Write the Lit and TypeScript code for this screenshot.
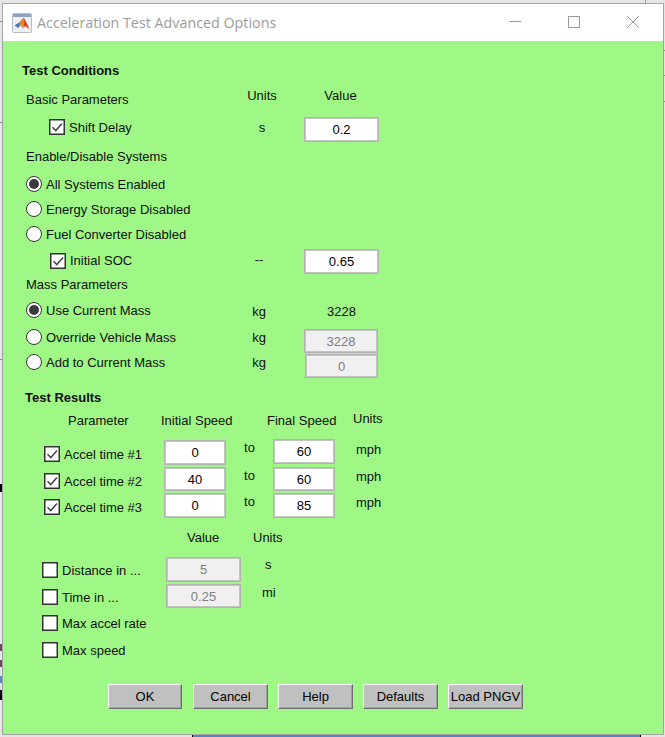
import { LitElement, html, css, svg } from "lit";
import { customElement } from "lit/decorators.js";

const checkMark = svg`<path d="M3.5 8.2 L6.8 11.6 L13 4.6" fill="none" stroke="#444" stroke-width="1.5"/>`;

@customElement("app-root")
export class AppRoot extends LitElement {
  static styles = css`
    :host {
      display: block;
      position: relative;
      width: 665px;
      height: 737px;
      overflow: hidden;
      background: #e6e6e6;
      font-family: "Liberation Sans", Arial, sans-serif;
      font-size: 13px;
      color: #101010;
    }
    .behind { position: absolute; }
    .line-l { left: 0; width: 2px; height: 1px; background: #8c8c8c; }
    .line-r { left: 664px; width: 1px; height: 1px; background: #8c8c8c; }
    .blk { left: 0; width: 2px; background: #000; }
    .speck { left: 0; width: 2px; height: 7px; background: #6a4a5c; }
    .speck.blue { background: #5a88b8; }
    .strip-blue { left: 193px; top: 735px; width: 447px; height: 2px; background: #4f86c6; }
    .strip-blk1 { left: 192px; top: 735px; width: 1px; height: 2px; background: #000; }
    .strip-blk2 { left: 640px; top: 735px; width: 1px; height: 2px; background: #000; }
    .top-blk { left: 645px; top: 0; width: 1px; height: 3px; background: #9a9a9a; }

    .window {
      position: relative;
      box-sizing: border-box;
      width: 662px;
      height: 732px;
      margin: 3px 0 0 2px;
      border: 1px solid #a3a3a3;
      display: flex;
      flex-direction: column;
    }
    .titlebar {
      height: 37px;
      flex: none;
      background: #fff;
      display: flex;
      align-items: center;
      padding-left: 9px;
    }
    .logo { width: 20px; height: 20px; margin-right: 5px; flex: none; }
    .title {
      font-family: "Open Sans", "Noto Sans", sans-serif;
      font-size: 14.3px;
      color: #9b9b9b;
      white-space: nowrap;
    }
    .controls { margin-left: auto; display: flex; padding-right: 1px; }
    .ctl {
      width: 59px;
      height: 37px;
      display: flex;
      align-items: center;
      justify-content: center;
    }
    .ctl svg { width: 14px; height: 14px; margin-bottom: 2px; }

    .panel {
      flex: 1;
      background: #9ff786;
      padding: 19px 0 0 23px;
      display: flex;
      flex-direction: column;
    }
    .row { display: grid; align-items: center; white-space: nowrap; }
    .h20 { height: 20px; }
    .h23 { height: 23px; }
    .h24 { height: 24px; }
    .h25 { height: 25px; }
    .mt2 { margin-top: 2px; }
    .mt3 { margin-top: 3px; }
    .mt4 { margin-top: 4px; }
    .mt5 { margin-top: 5px; }
    .mt6 { margin-top: 6px; }
    .mt7 { margin-top: 7px; }
    .mt8 { margin-top: 8px; }
    .mt9 { margin-top: 9px; }
    .mt10 { margin-top: 10px; }
    .mt12 { margin-top: 12px; }
    .mt24 { margin-top: 24px; }

    .cond { grid-template-columns: 214px 44px 95px; }
    .speed { grid-template-columns: 138px 62px 47px 62px auto; }
    .extra { grid-template-columns: 140px 75px auto; }

    .center { text-align: center; }
    .right-col { justify-self: end; width: 75px; text-align: center; box-sizing: border-box; }
    .shift-l1 { padding-right: 2px; }
    .shift-l3 { margin-right: 6px; }
    .bold { font-weight: bold; font-size: 13px; }
    .bold-tc { margin-left: -4px; }
    .bold-tr { margin-left: -1px; }

    /* vertical nudges inside a centred row: a margin of 2n moves the cell by n */
    .up1 { margin-bottom: 2px; }
    .up15 { margin-bottom: 3px; }
    .up2 { margin-bottom: 4px; }
    .up25 { margin-bottom: 5px; }
    .up3 { margin-bottom: 6px; }
    .up4 { margin-bottom: 8px; }
    .up5 { margin-bottom: 10px; }
    .dn05 { margin-top: 1px; }
    .dn1 { margin-top: 2px; }
    .dn15 { margin-top: 3px; }
    .dn2 { margin-top: 4px; }
    .dn35 { margin-top: 7px; }

    .opt { display: flex; align-items: center; gap: 4px; }
    .in-24 { margin-left: 24px; }
    .in-23 { margin-left: 23px; }
    .in-18 { margin-left: 18px; }
    .in-16 { margin-left: 16px; }
    .box { width: 16px; height: 16px; flex: none; display: block; }
    .radio {
      box-sizing: border-box;
      width: 16px;
      height: 16px;
      flex: none;
      border: 1px solid #333;
      border-radius: 50%;
      background: #fff;
      display: flex;
      align-items: center;
      justify-content: center;
    }
    .radio.on::after {
      content: "";
      width: 10px;
      height: 10px;
      border-radius: 50%;
      background: #3a3a3a;
    }
    .field {
      box-sizing: border-box;
      border: 1px solid #b3b3b3;
      outline: 1px solid #c4c4c4;
      outline-offset: -2px;
      background: #fff;
      color: #000;
      text-align: center;
      width: 100%;
      height: 100%;
      display: flex;
      align-items: center;
      justify-content: center;
    }
    .field.off { background: #f0f0f0; color: #7f7f7f; }
    .fcell { height: 100%; }
    .fcell.w74 { width: 74px; justify-self: start; }
    .fcell.w73 { width: 73px; justify-self: start; margin-left: 1px; }
    .to { justify-self: center; }

    .ml-21 { margin-left: 21px; }
    .ml-24 { margin-left: 24px; }
    .ml-42 { margin-left: 42px; }
    .ml-12 { margin-left: 12px; }
    .ml-18 { margin-left: 18px; }
    .ml-m3 { margin-left: -3px; }
    .ml-m6 { margin-left: -6px; }

    .slot3 { justify-self: end; width: 75px; }

    .buttons { display: flex; gap: 10px; margin-left: 82px; }
    .btn {
      box-sizing: border-box;
      width: 75px;
      height: 25px;
      background: #c0c0c0;
      border: 1px solid;
      border-color: #fff #6e6e6e #6e6e6e #fff;
      box-shadow: inset -1px -1px 0 #a0a0a0;
      font: inherit;
      color: #000;
      padding: 0;
    }
    .btn.first { width: 74px; margin-right: 1px; }
  `;

  private check(label: string, on: boolean) {
    return html`<span class="opt">
      <svg class="box" viewBox="0 0 16 16">
        <rect x=".75" y=".75" width="14.5" height="14.5" fill="#fff" stroke="#333" stroke-width="1.5"/>
        ${on ? checkMark : ""}
      </svg>
      <span>${label}</span>
    </span>`;
  }

  private radio(label: string, on: boolean) {
    return html`<span class="opt">
      <span class="radio ${on ? "on" : ""}"></span>
      <span>${label}</span>
    </span>`;
  }

  private field(value: string, off = false) {
    return html`<div class="field ${off ? "off" : ""}">${value}</div>`;
  }

  private speedRow(
    cls: string,
    label: string,
    a: string,
    b: string,
    toUp: string,
    mphUp: string,
    bUp = "",
    labelDn = "dn15",
  ) {
    return html`<div class="row speed ${cls}">
      <div class="in-18 ${labelDn}">${this.check(label, true)}</div>
      <div class="fcell">${this.field(a)}</div>
      <div class="to ${toUp}">to</div>
      <div class="fcell ${bUp}">${this.field(b)}</div>
      <div class="ml-21 ${mphUp}">mph</div>
    </div>`;
  }

  render() {
    return html`
      <div class="behind line-l" style="top:21px"></div>
      <div class="behind line-l" style="top:122px"></div>
      <div class="behind line-l" style="top:359px"></div>
      <div class="behind blk" style="top:484px;height:8px"></div>
      <div class="behind blk" style="top:690px;height:10px"></div>
      <div class="behind speck" style="top:644px"></div>
      <div class="behind speck" style="top:660px"></div>
      <div class="behind speck blue" style="top:676px"></div>
      <div class="behind line-r" style="top:50px"></div>
      <div class="behind line-r" style="top:75px"></div>
      <div class="behind line-r" style="top:101px"></div>
      <div class="behind top-blk"></div>
      <div class="behind strip-blk1"></div>
      <div class="behind strip-blue"></div>
      <div class="behind strip-blk2"></div>

      <div class="window">
        <div class="titlebar">
          <svg class="logo" viewBox="0 0 20 20">
            <rect x=".5" y=".5" width="19" height="19" rx="1" fill="#eef0f3" stroke="#b9bcc2"/>
            <rect x="1" y="1" width="18" height="3" fill="#8ea3bd"/>
            <path d="M2.5 12.5 L7 9.5 L9 10.5 L6.5 15 Z" fill="#3f7fb6"/>
            <path d="M7 9.5 L11.5 4.8 L13.5 10 L10 15 L8 11.5 Z" fill="#e8872a"/>
            <path d="M11.5 4.8 C13.5 7 15.5 12 17.5 16 C15.5 15 14.5 13.5 13 13 L11 16 L12.5 9.5 Z" fill="#d4401c"/>
          </svg>
          <span class="title">Acceleration Test Advanced Options</span>
          <div class="controls">
            <div class="ctl"><svg viewBox="0 0 14 14"><path d="M1 6.5 H13" stroke="#999" stroke-width="1"/></svg></div>
            <div class="ctl"><svg viewBox="0 0 14 14"><rect x="1.5" y="1.5" width="11" height="11" fill="none" stroke="#999" stroke-width="1"/></svg></div>
            <div class="ctl"><svg viewBox="0 0 14 14"><path d="M1 1 L13 13 M13 1 L1 13" stroke="#999" stroke-width="1"/></svg></div>
          </div>
        </div>

        <div class="panel">
          <div class="row h20"><div class="bold bold-tc dn05">Test Conditions</div></div>

          <div class="row cond h20 mt5">
            <div class="dn35">Basic Parameters</div>
            <div class="center up1">Units</div>
            <div class="right-col up1 shift-l1">Value</div>
          </div>
          <div class="row cond h25 mt12">
            <div class="in-23 up25">${this.check("Shift Delay", true)}</div>
            <div class="center up2">s</div>
            <div class="right-col fcell">${this.field("0.2")}</div>
          </div>

          <div class="row h20 mt4"><div>Enable/Disable Systems</div></div>
          <div class="row h20 mt8"><div>${this.radio("All Systems Enabled", true)}</div></div>
          <div class="row h20 mt5"><div>${this.radio("Energy Storage Disabled", false)}</div></div>
          <div class="row h20 mt5"><div>${this.radio("Fuel Converter Disabled", false)}</div></div>
          <div class="row cond h25 mt5">
            <div class="in-24 up1">${this.check("Initial SOC", true)}</div>
            <div class="center up2 shift-l3">--</div>
            <div class="right-col fcell">${this.field("0.65")}</div>
          </div>

          <div class="row h20"><div>Mass Parameters</div></div>
          <div class="row cond h20 mt6">
            <div>${this.radio("Use Current Mass", true)}</div>
            <div class="center dn1 shift-l3">kg</div>
            <div class="right-col dn1">3228</div>
          </div>
          <div class="row cond h23 mt9">
            <div class="up4">${this.radio("Override Vehicle Mass", false)}</div>
            <div class="center up4 shift-l3">kg</div>
            <div class="slot3 fcell">
              <div class="fcell w74">${this.field("3228", true)}</div>
            </div>
          </div>
          <div class="row cond h23 mt2">
            <div class="up4">${this.radio("Add to Current Mass", false)}</div>
            <div class="center up4 shift-l3">kg</div>
            <div class="slot3 fcell">
              <div class="fcell w73">${this.field("0", true)}</div>
            </div>
          </div>

          <div class="row h20 mt10"><div class="bold bold-tr dn05">Test Results</div></div>
          <div class="row speed h20 mt3">
            <div class="ml-42">Parameter</div>
            <div class="ml-m3">Initial Speed</div>
            <div></div>
            <div class="ml-m6">Final Speed</div>
            <div class="ml-18 up15">Units</div>
          </div>

          ${this.speedRow("h25 mt10", "Accel time #1", "0", "60", "up5", "up3", "up1")}
          ${this.speedRow("h24 mt2", "Accel time #2", "40", "60", "up4", "up3", "", "dn2")}
          ${this.speedRow("h25 mt2", "Accel time #3", "0", "85", "up4", "up3")}

          <div class="row extra h20 mt9">
            <div></div>
            <div class="ml-21">Value</div>
            <div class="ml-12">Units</div>
          </div>
          <div class="row extra h25 mt10">
            <div class="in-16 dn05">${this.check("Distance in ...", false)}</div>
            <div class="fcell">${this.field("5", true)}</div>
            <div class="ml-24 up5">s</div>
          </div>
          <div class="row extra h24 mt2">
            <div class="in-16 dn1">${this.check("Time in ...", false)}</div>
            <div class="fcell">${this.field("0.25", true)}</div>
            <div class="ml-21 up4">mi</div>
          </div>
          <div class="row h20 mt5"><div class="in-16">${this.check("Max accel rate", false)}</div></div>
          <div class="row h20 mt7"><div class="in-16">${this.check("Max speed", false)}</div></div>

          <div class="buttons mt24">
            <button class="btn first">OK</button>
            <button class="btn">Cancel</button>
            <button class="btn">Help</button>
            <button class="btn">Defaults</button>
            <button class="btn">Load PNGV</button>
          </div>
        </div>
      </div>
    `;
  }
}
